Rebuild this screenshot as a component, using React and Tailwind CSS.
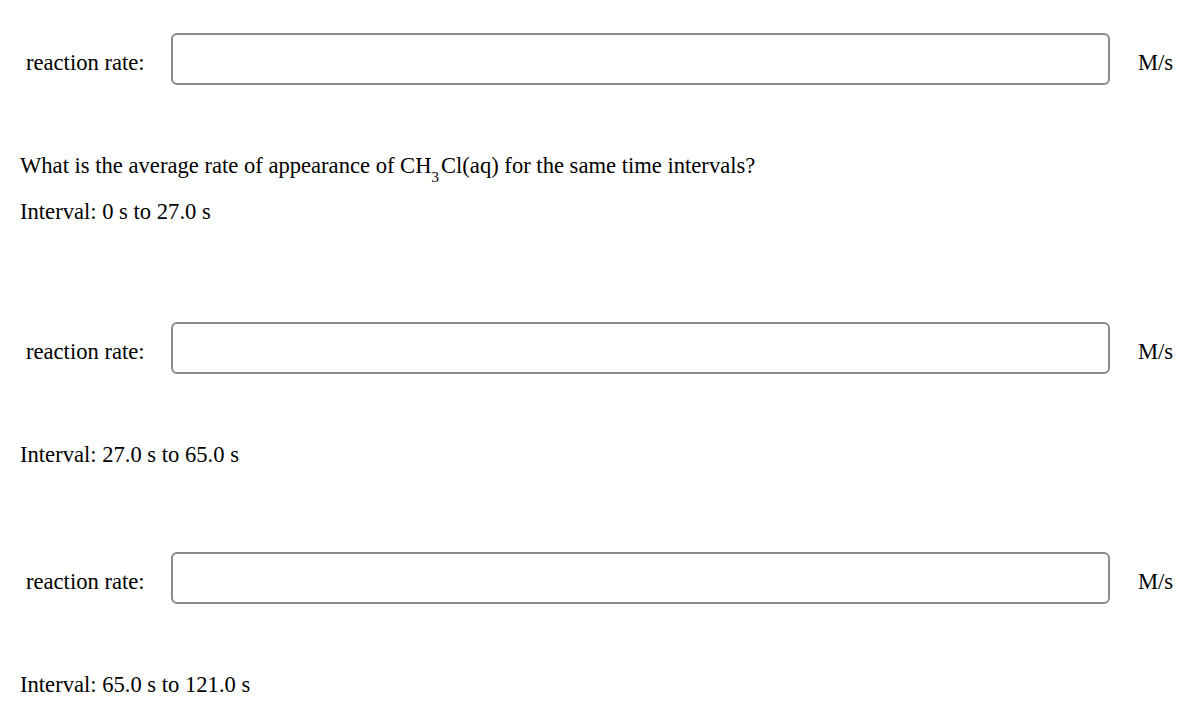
export default function App() {
  const serif = 'font-["Liberation_Serif","Times_New_Roman",serif]';

  const RateRow = ({ className }) => (
    <div className={`flex items-center h-[52px] ${className}`}>
      <label className="w-[171px] pl-[26px] mt-[7px] shrink-0 leading-[26px]">reaction rate:</label>
      <input
        type="text"
        className="w-[939px] h-[52px] shrink-0 rounded-[6px] border-2 border-[#8c8c8c] bg-white outline-none"
      />
      <span className="ml-[28px] mt-[7px] leading-[26px]">M/s</span>
    </div>
  );

  return (
    <div className={`${serif} text-[22.6px] text-black bg-white w-[1185px] h-[707px] overflow-hidden`}>
      <RateRow className="mt-[33px]" />

      <p className="mt-[68px] pl-[20px] leading-[26px]">
        What is the average rate of appearance of CH<sub className="text-[15px] relative bottom-[-9px] mr-[2px]">3</sub>Cl(aq) for the same time intervals?
      </p>
      <p className="mt-[20px] pl-[20px] leading-[26px]">Interval: 0 s to 27.0 s</p>

      <RateRow className="mt-[97px]" />

      <p className="mt-[68px] pl-[20px] leading-[26px]">Interval: 27.0 s to 65.0 s</p>

      <RateRow className="mt-[84px]" />

      <p className="mt-[68px] pl-[20px] leading-[26px]">Interval: 65.0 s to 121.0 s</p>
    </div>
  );
}
